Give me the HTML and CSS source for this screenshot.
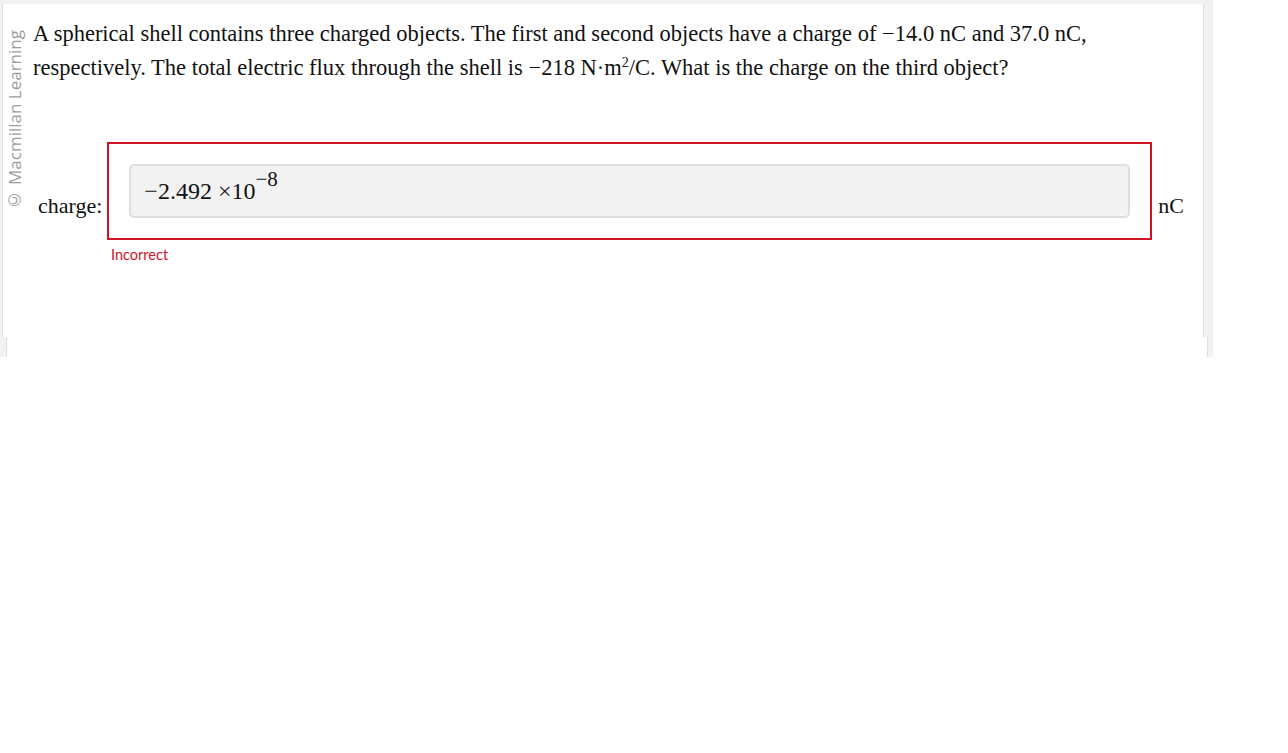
FILE: index.html
```html
<!DOCTYPE html>
<html lang="en">
<head>
  <meta charset="UTF-8">
  <title>Question</title>
  <link rel="stylesheet" href="styles.css">
</head>
<body>
  <div class="frame">
    <div class="panel">
      <div class="side">
        <span class="copyright">&copy; Macmillan Learning</span>
      </div>
      <div class="question">
        <p class="prompt">A spherical shell contains three charged objects. The first and second objects have a charge of &minus;14.0&nbsp;nC and 37.0&nbsp;nC, respectively. The total electric flux through the shell is &minus;218&nbsp;N&middot;m<sup>2</sup>/C. What is the charge on the third object?</p>

        <div class="answer-row">
          <span class="label">charge:</span>
          <div class="answer-box">
            <div class="answer-field">&minus;2.492 &times;10<span class="exp">&minus;8</span></div>
          </div>
          <span class="unit">nC</span>
        </div>
        <p class="feedback">Incorrect</p>
      </div>
    </div>
    <div class="panel-foot"></div>
  </div>
</body>
</html>
```

FILE: styles.css
```css
:root {
  --frame-gray: #f2f2f2;
  --edge-gray: #dedede;
  --text: #111111;
  --muted: #9c9c9c;
  --error: #cf1424;
}

* {
  margin: 0;
  padding: 0;
  box-sizing: border-box;
}

body {
  background: #ffffff;
  color: var(--text);
  font-family: 'Liberation Serif', 'Times New Roman', serif;
}

.frame {
  width: 1213px;
  background: var(--frame-gray);
  padding-top: 4px;
}

.panel {
  display: flex;
  height: 333px;
  margin-left: 2px;
  width: 1202px;
  background: #ffffff;
  border-left: 1px solid var(--edge-gray);
  border-right: 1px solid var(--edge-gray);
}

.side {
  width: 30px;
  flex-shrink: 0;
  padding-top: 26px;
}

.copyright {
  display: inline-block;
  writing-mode: vertical-rl;
  transform: rotate(180deg);
  font-family: 'Open Sans', sans-serif;
  font-size: 17px;
  line-height: 23px;
  color: var(--muted);
}

.question {
  flex: 1;
  padding-top: 13px;
}

.prompt {
  font-size: 22.5px;
  line-height: 34px;
  max-width: 1100px;
}

.prompt sup {
  font-size: 14px;
  line-height: 0;
}

.answer-row {
  display: flex;
  margin-top: 57px;
  padding-left: 5px;
}

.label,
.unit {
  align-self: flex-end;
  font-size: 22px;
  line-height: 34px;
  margin-bottom: 17px;
}

.label {
  margin-right: 5px;
}

.unit {
  margin-left: 6px;
}

.answer-box {
  width: 1045px;
  padding: 20px;
  border: 2px solid var(--error);
}

.answer-field {
  height: 54px;
  padding: 0 13px;
  background: var(--frame-gray);
  border: 2px solid var(--edge-gray);
  border-radius: 5px;
  font-size: 24px;
  line-height: 50px;
}

.exp {
  font-size: 21px;
  vertical-align: 13px;
  line-height: 0;
}

.feedback {
  margin: 6px 0 0 78px;
  font-family: Lato, sans-serif;
  font-size: 14.5px;
  color: var(--error);
}

.panel-foot {
  height: 20px;
  margin-left: 6px;
  width: 1202px;
  background: #ffffff;
  border-left: 1px solid var(--edge-gray);
  border-right: 1px solid var(--edge-gray);
}
```
